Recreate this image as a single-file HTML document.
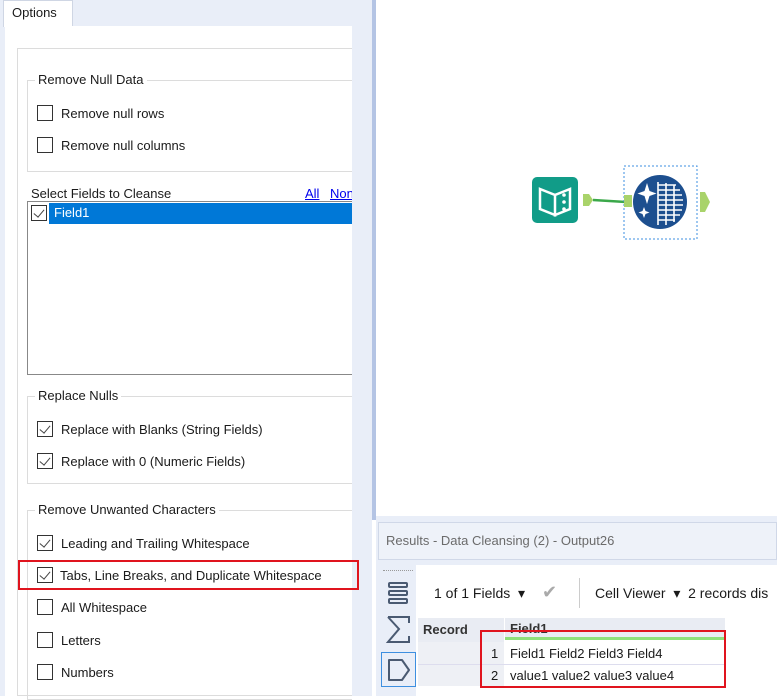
<!DOCTYPE html>
<html><head><meta charset="utf-8"><style>
*{box-sizing:border-box;margin:0;padding:0}
body{width:777px;height:696px;overflow:hidden;background:#fff;font-family:"Liberation Sans",sans-serif;font-size:13px;color:#1a1a1a;position:relative}
.a{position:absolute}
.cb{position:absolute;width:16px;height:16px;border:1px solid #333;background:#fff}
.cb.c::after{content:"";position:absolute;left:4px;top:1px;width:5px;height:9px;border:solid #444;border-width:0 1.5px 1.5px 0;transform:rotate(40deg)}
.lbl{position:absolute;white-space:nowrap}
.grp{position:absolute;border:1px solid #dcdcdc;border-right:none}
.gt{position:absolute;background:#fff;padding:0 3px;white-space:nowrap}
</style></head><body>
<div class="a" style="left:0;top:0;width:372px;height:696px;background:#e9eef8"></div>
<div class="a" style="left:372px;top:0;width:4px;height:520px;background:#b4c4e4"></div>
<div class="a" style="left:3px;top:0;width:70px;height:27px;background:#fff;border:1px solid #cfd6e4;border-bottom:none"></div>
<div class="lbl" style="left:12px;top:5px">Options</div>
<div class="a" style="left:5px;top:26px;width:347px;height:670px;background:#fff"></div>
<div class="a" style="left:17px;top:48px;width:335px;height:648px;border:1px solid #dcdcdc;border-right:none"></div>

<div class="grp" style="left:27px;top:80px;width:325px;height:92px"></div>
<div class="gt" style="left:35px;top:72px">Remove Null Data</div>
<div class="cb" style="left:37px;top:105px"></div><div class="lbl" style="left:61px;top:106px">Remove null rows</div>
<div class="cb" style="left:37px;top:137px"></div><div class="lbl" style="left:61px;top:138px">Remove null columns</div>

<div class="lbl" style="left:31px;top:186px">Select Fields to Cleanse</div>
<div class="lbl" style="left:305px;top:186px;color:#0000ee;text-decoration:underline">All</div>
<div class="lbl" style="left:330px;top:186px;color:#0000ee;text-decoration:underline;width:22px;overflow:hidden">None</div>
<div class="a" style="left:27px;top:201px;width:325px;height:174px;border:1px solid #888;border-right:none"></div>
<div class="a" style="left:49px;top:203px;width:303px;height:21px;background:#0078d7"></div>
<div class="cb c" style="left:31px;top:205px"></div>
<div class="lbl" style="left:54px;top:205px;color:#fff">Field1</div>

<div class="grp" style="left:27px;top:396px;width:325px;height:88px"></div>
<div class="gt" style="left:35px;top:388px">Replace Nulls</div>
<div class="cb c" style="left:37px;top:421px"></div><div class="lbl" style="left:61px;top:422px">Replace with Blanks (String Fields)</div>
<div class="cb c" style="left:37px;top:453px"></div><div class="lbl" style="left:61px;top:454px">Replace with 0 (Numeric Fields)</div>

<div class="grp" style="left:27px;top:510px;width:325px;height:190px"></div>
<div class="gt" style="left:35px;top:502px">Remove Unwanted Characters</div>
<div class="cb c" style="left:37px;top:535px"></div><div class="lbl" style="left:61px;top:536px">Leading and Trailing Whitespace</div>
<div class="cb c" style="left:37px;top:567px"></div><div class="lbl" style="left:60px;top:568px">Tabs, Line Breaks, and Duplicate Whitespace</div>
<div class="a" style="left:18px;top:560px;width:341px;height:30px;border:2px solid #e0141e"></div>
<div class="cb" style="left:37px;top:599px"></div><div class="lbl" style="left:61px;top:600px">All Whitespace</div>
<div class="cb" style="left:37px;top:632px"></div><div class="lbl" style="left:61px;top:633px">Letters</div>
<div class="cb" style="left:37px;top:664px"></div><div class="lbl" style="left:61px;top:665px">Numbers</div>

<svg class="a" style="left:520px;top:155px" width="190" height="90">
<rect x="12" y="22" width="46" height="46" rx="5" fill="#119c88"/>
<path d="M20 34 L35 40 L35 60 L20 54 Z M50 34 L35 40 L35 60 L50 54 Z" fill="none" stroke="#fff" stroke-width="2.5"/>
<circle cx="44" cy="40" r="1.8" fill="#fff"/><circle cx="44" cy="47" r="1.8" fill="#fff"/><circle cx="44" cy="54" r="1.8" fill="#fff"/>
<path d="M63 39 h6 l4 6 l-4 6 h-6z" fill="#a9d36a"/>
<line x1="73" y1="45" x2="106" y2="47" stroke="#3ba84a" stroke-width="2.5"/>
<rect x="104" y="11" width="73" height="73" fill="none" stroke="#3d8fe0" stroke-dasharray="2,2"/>
<rect x="104" y="40" width="8" height="12" fill="#a9d36a"/>
<circle cx="140" cy="47" r="27" fill="#1d4f8f"/>
<g stroke="#fff" stroke-width="1.6">
<line x1="138" y1="27" x2="138" y2="70"/>
<line x1="138" y1="30" x2="156" y2="30"/><line x1="138" y1="35" x2="160" y2="35"/><line x1="138" y1="40" x2="162" y2="40"/><line x1="138" y1="45" x2="163" y2="45"/><line x1="138" y1="50" x2="163" y2="50"/><line x1="138" y1="55" x2="162" y2="55"/><line x1="138" y1="60" x2="160" y2="60"/><line x1="138" y1="65" x2="155" y2="65"/>
<line x1="146" y1="28" x2="146" y2="70"/><line x1="154" y1="30" x2="154" y2="67"/>
</g>
<path d="M127 28 l2.5 8 l7 2.5 l-7 2.5 l-2.5 8 l-2.5 -8 l-7 -2.5 l7 -2.5z" fill="#fff"/>
<path d="M124 52 l1.5 4 l4 1.5 l-4 1.5 l-1.5 4 l-1.5 -4 l-4 -1.5 l4 -1.5z" fill="#fff"/>
<path d="M180 37 h5 l5 10 l-5 10 h-5z" fill="#a9d36a"/>
</svg>

<div class="a" style="left:376px;top:516px;width:401px;height:180px;background:#e9eef8"></div>
<div class="a" style="left:378px;top:522px;width:399px;height:38px;background:#eef2f9;border:1px solid #d0d8e8"></div>
<div class="lbl" style="left:386px;top:533px;color:#6b6b6b">Results - Data Cleansing (2) - Output26</div>
<div class="a" style="left:416px;top:565px;width:361px;height:131px;background:#fff"></div>
<div class="a" style="left:383px;top:570px;width:30px;height:3px;border-top:1px dotted #999"></div>
<div class="a" style="left:388px;top:582px;width:20px;height:6px;border:2px solid #4a5a72;border-radius:2px"></div>
<div class="a" style="left:388px;top:590px;width:20px;height:6px;border:2px solid #4a5a72;border-radius:2px"></div>
<div class="a" style="left:388px;top:598px;width:20px;height:6px;border:2px solid #4a5a72;border-radius:2px"></div>
<svg class="a" style="left:385px;top:615px" width="28" height="30"><path d="M3 2 H24 V8 M3 2 L14 14 L3 27 H24 V21" fill="none" stroke="#4a5a72" stroke-width="2"/></svg>
<div class="a" style="left:381px;top:652px;width:35px;height:35px;border:1px solid #3d8fe0;background:#e9eef8"></div>
<svg class="a" style="left:386px;top:657px" width="26" height="26"><path d="M3 3 H16 L23 13 L16 23 H3 Z" fill="none" stroke="#4a5a72" stroke-width="2" stroke-linejoin="round"/></svg>
<div class="lbl" style="left:434px;top:585px;font-size:14px">1 of 1 Fields &nbsp;▾</div>
<div class="lbl" style="left:542px;top:582px;font-size:18px;color:#aaa">✔</div>
<div class="a" style="left:579px;top:578px;width:1px;height:30px;background:#ccc"></div>
<div class="lbl" style="left:595px;top:585px;font-size:14px">Cell Viewer &nbsp;▾ &nbsp;2 records dis</div>
<div class="a" style="left:418px;top:618px;width:86px;height:24px;background:#e9ecf3"></div>
<div class="lbl" style="left:423px;top:622px;font-weight:bold;color:#333">Record</div>
<div class="a" style="left:505px;top:618px;width:220px;height:21px;background:#e9ecf3"></div>
<div class="a" style="left:505px;top:637px;width:220px;height:3px;background:#8fe07a"></div>
<div class="lbl" style="left:510px;top:621px;font-weight:bold;color:#333">Field1</div>
<div class="a" style="left:418px;top:642px;width:86px;height:44px;background:#eef0f5"></div>
<div class="lbl" style="left:491px;top:646px">1</div><div class="lbl" style="left:510px;top:646px">Field1 Field2 Field3 Field4</div>
<div class="a" style="left:418px;top:664px;width:307px;height:1px;background:#dde"></div>
<div class="lbl" style="left:491px;top:668px">2</div><div class="lbl" style="left:510px;top:668px">value1 value2 value3 value4</div>
<div class="a" style="left:480px;top:630px;width:246px;height:58px;border:2px solid #e0141e"></div>
</body></html>
